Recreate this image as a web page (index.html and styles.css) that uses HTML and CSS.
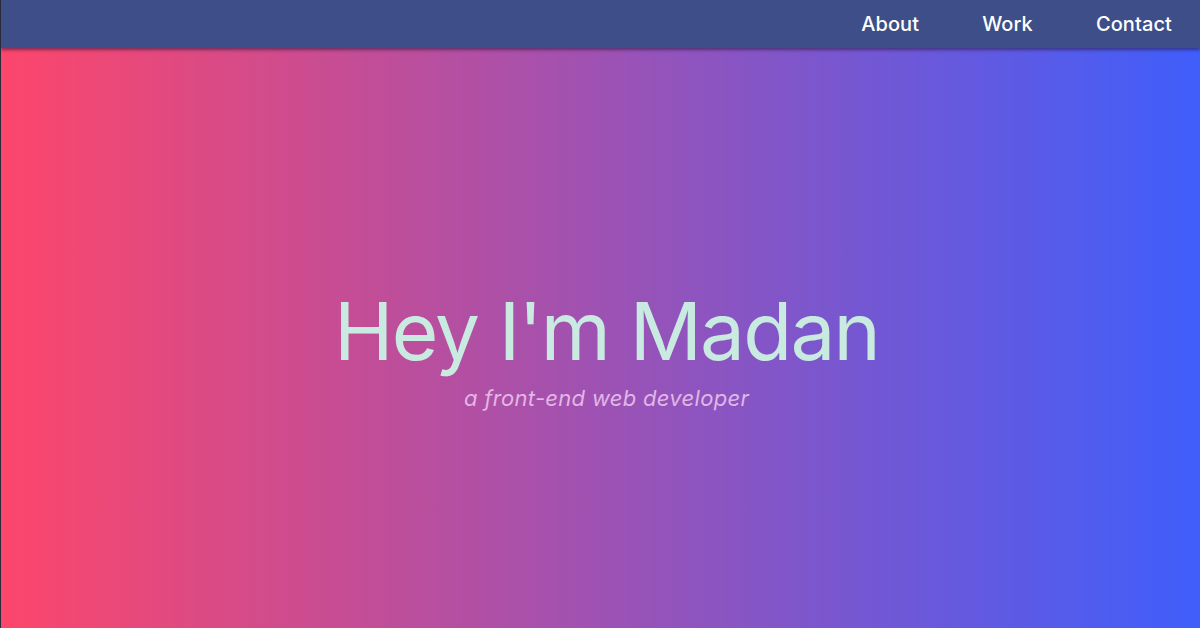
FILE: index.html
```html
<!DOCTYPE html>
<html lang="en">
<head>
<meta charset="utf-8">
<title>Madan</title>
<link rel="stylesheet" href="styles.css">
</head>
<body>
<header class="nav">
  <a class="nav-link" href="#">About</a>
  <a class="nav-link" href="#">Work</a>
  <a class="nav-link" href="#">Contact</a>
</header>
<main class="hero">
  <div class="hero-text">
    <h1 class="title">Hey I'm Madan</h1>
    <p class="subtitle">a front-end web developer</p>
  </div>
</main>
</body>
</html>
```
FILE: styles.css
```css
* { box-sizing: border-box; }
html, body { margin: 0; height: 100%; }
body {
  font-family: "Inter", "Noto Sans", sans-serif;
  display: flex;
  flex-direction: column;
  overflow: hidden;
  border-left: 1px solid #2a2a3a;
}
.nav {
  height: 48px;
  background: #3d4e88;
  display: flex;
  justify-content: flex-end;
  align-items: center;
  gap: 63px;
  padding: 0 28px 0 0;
  box-shadow: 0 2px 3px rgba(40, 20, 60, 0.55);
  position: relative;
  z-index: 1;
}
.nav-link {
  color: #ffffff;
  text-decoration: none;
  font-size: 20px;
  font-weight: 500;
  letter-spacing: 0.1px;
}
.hero {
  flex: 1;
  background: linear-gradient(90deg, #fc466b 0%, #3f5efb 100%);
  display: flex;
  align-items: center;
  justify-content: center;
  padding: 24px 0 0 12px;
}
.hero-text { text-align: center; }
.title {
  margin: 0;
  font-size: 80px;
  font-weight: 400;
  line-height: 1;
  color: #c8eae0;
  letter-spacing: -1.8px;
}
.subtitle {
  margin: 16px 0 0;
  font-size: 22px;
  line-height: 1;
  font-style: italic;
  font-weight: 400;
  color: #e2b6e6;
  letter-spacing: 0.3px;
}
```
